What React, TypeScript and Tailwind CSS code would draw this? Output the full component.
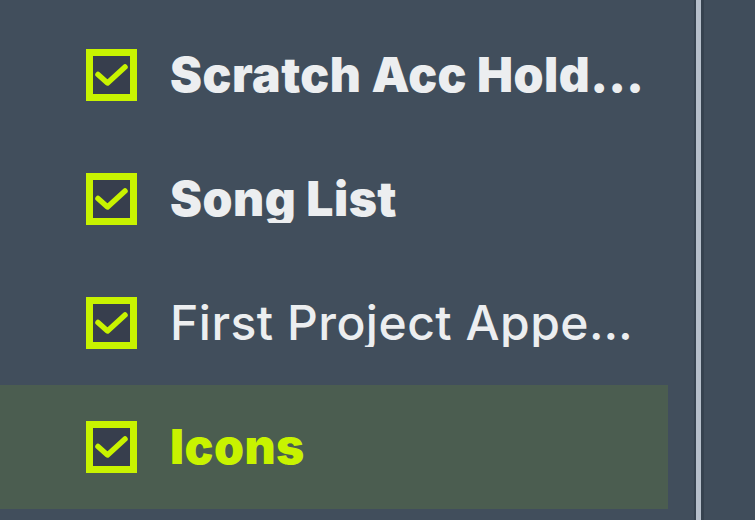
import { useState } from "react";

type Item = { id: number; name: string; bold: boolean };

const items: Item[] = [
  { id: 1, name: "Scratch Acc Holder Notes", bold: true },
  { id: 2, name: "Song List", bold: true },
  { id: 3, name: "First Project Appendix", bold: false },
  { id: 4, name: "Icons", bold: true },
];

function CheckBox() {
  return (
    <div className="w-[51px] h-[52px] shrink-0 border-[7px] border-[#c8f300] bg-[#373e4d] flex items-center justify-center">
      <svg width="37" height="38" viewBox="0 0 37 38" fill="none">
        <path
          d="M5 18.5 L14.5 27 L32 11"
          stroke="#c8f300"
          strokeWidth="5.5"
          strokeLinecap="round"
          strokeLinejoin="round"
        />
      </svg>
    </div>
  );
}

export default function App() {
  const [selected] = useState(4);

  return (
    <div
      className="w-[755px] h-[520px] flex bg-[#414e5c] overflow-hidden"
      style={{ fontFamily: "Inter, 'Noto Sans', sans-serif" }}
    >
      <div className="w-[694px] shrink-0 pt-[13px]">
        {items.map((it) => {
          const active = it.id === selected;
          return (
            <div
              key={it.id}
              className={
                active
                  ? "w-[668px] h-[124px] flex items-center pl-[86px] pr-[12px] bg-[#4b5d50]"
                  : "w-[668px] h-[124px] flex items-center pl-[86px] pr-[12px]"
              }
            >
              <CheckBox />
              <span
                className={
                  (it.bold ? "font-black " : "font-medium ") +
                  (active ? "text-[#c8f300] " : "text-[#eceef0] ") +
                  "ml-[33px] text-[48px] leading-none tracking-[0.5px] truncate"
                }
              >
                {it.name}
              </span>
            </div>
          );
        })}
      </div>
      <div className="w-[10px] shrink-0 flex">
        <div className="w-[2px] bg-[#36424f]" />
        <div className="w-[5px] bg-[#b6bfcb]" />
        <div className="w-[3px] bg-[#36424f]" />
      </div>
      <div className="flex-1 bg-[#404d5b]" />
    </div>
  );
}
